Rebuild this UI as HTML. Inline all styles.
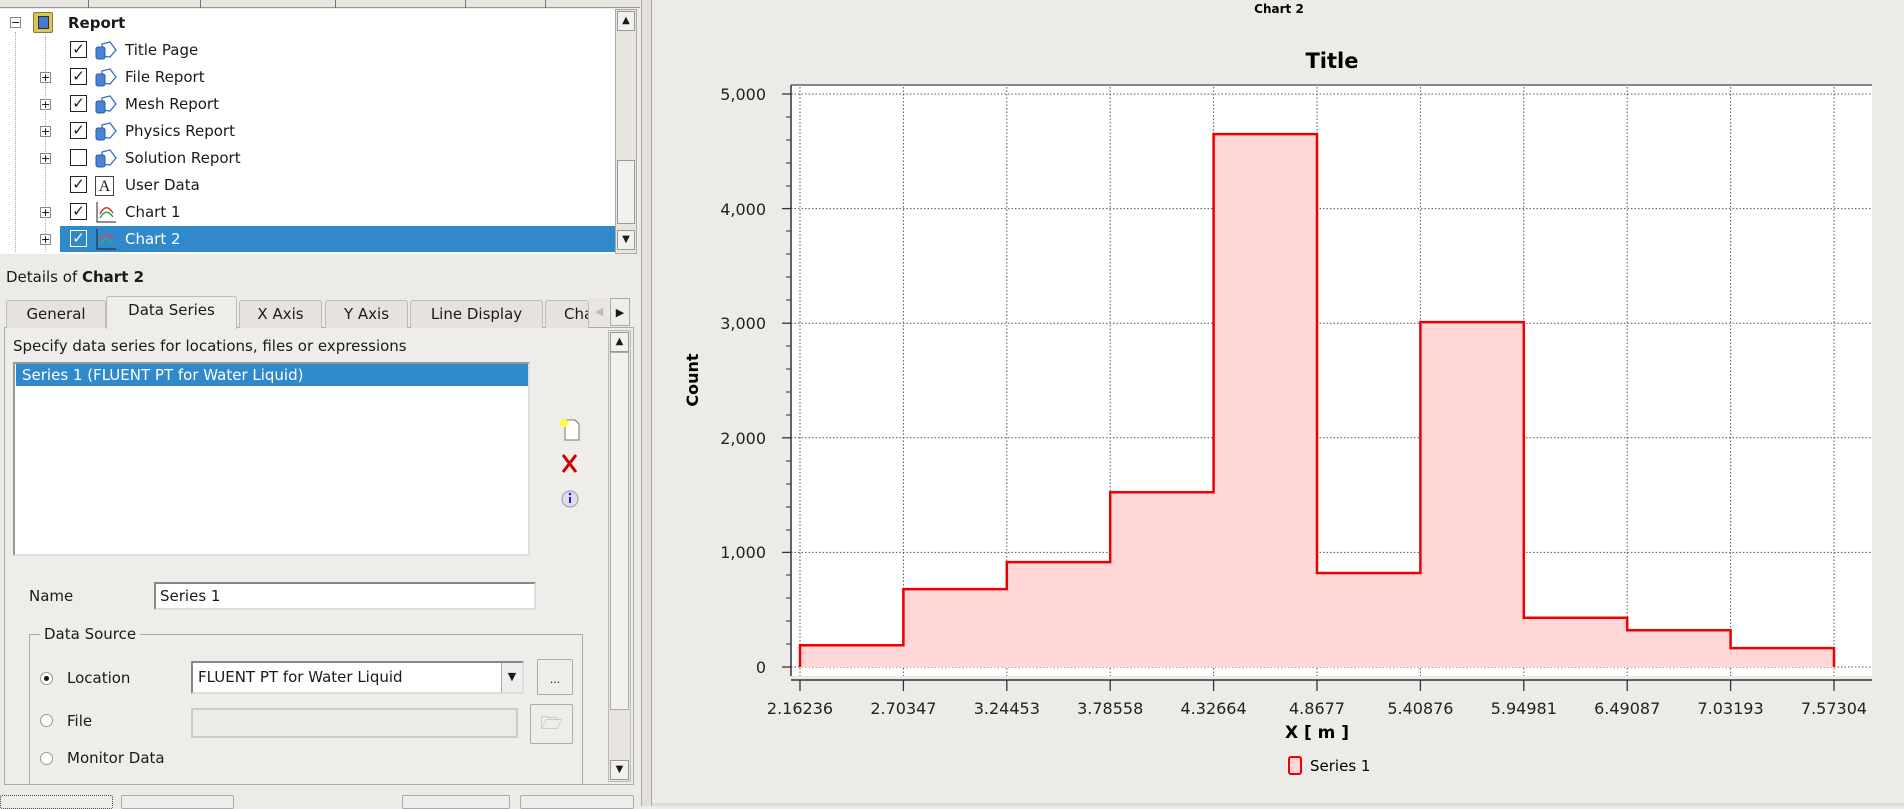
<!DOCTYPE html>
<html><head><meta charset="utf-8"><style>
*{box-sizing:border-box;margin:0;padding:0}
body{width:1904px;height:806px;overflow:hidden;background:#edebe7;font-family:"DejaVu Sans","Liberation Sans",sans-serif;font-size:15px;color:#1a1a1a;position:relative}
.a{position:absolute}
.row{position:absolute;height:26px;line-height:26px;white-space:nowrap}
.cb{position:absolute;width:17px;height:17px;border:1.5px solid #222;background:#fff;font-size:15px;line-height:14px;text-align:center;font-weight:bold}
.ex{position:absolute;width:11px;height:11px;border:1px solid #888;background:#fff;font-size:11px;line-height:9px;text-align:center;color:#000}
.ic{position:absolute;width:18px;height:18px}
.tab{position:absolute;top:300px;height:28px;line-height:26px;text-align:center;border:1px solid #bbb;border-bottom:none;background:#e6e3de;border-radius:3px 3px 0 0}
.btn{position:absolute;border:1px solid #aaa;background:#efede9;border-radius:2px}
.rad{position:absolute;width:13px;height:13px;border-radius:50%;border:1px solid #999;background:#fff}
</style></head><body>
<!-- top strip -->
<div class="a" style="left:0;top:0;width:640px;height:8px;background:#e9e6e1;border-bottom:1px solid #999"></div>
<div class="a" style="left:88px;top:0;width:1px;height:8px;background:#777"></div>
<div class="a" style="left:200px;top:0;width:1px;height:8px;background:#777"></div>
<div class="a" style="left:335px;top:0;width:1px;height:8px;background:#777"></div>
<div class="a" style="left:465px;top:0;width:1px;height:8px;background:#777"></div>
<div class="a" style="left:545px;top:0;width:1px;height:8px;background:#777"></div>
<!-- tree -->
<div class="a" style="left:0;top:9px;width:615px;height:245px;background:#fff"></div>
<div class="a" style="left:15px;top:32px;height:220px;border-left:1px dotted #aaa"></div>
<div class="a" style="left:45px;top:36px;height:216px;border-left:1px dotted #aaa"></div>
<div class="a" style="left:615px;top:9px;width:22px;height:245px;background:#e8e5e0;border:1px solid #aaa"></div>
<div class="a" style="left:617px;top:11px;width:18px;height:20px;background:#f3f1ee;border:1px solid #999;font-size:10px;text-align:center;line-height:18px">▲</div>
<div class="a" style="left:617px;top:160px;width:18px;height:64px;background:#f3f1ee;border:1px solid #999"></div>
<div class="a" style="left:617px;top:230px;width:18px;height:20px;background:#f3f1ee;border:1px solid #999;font-size:10px;text-align:center;line-height:18px">▼</div>
<div class="ex" style="left:10px;top:17px">−</div>
<div class="a" style="left:33px;top:12px;width:20px;height:21px;background:#d9c55a;border:1px solid #8a7a20;border-radius:2px"><div style="margin:3px 4px;width:11px;height:13px;background:#4a78d0;border:1px solid #234"></div></div>
<div class="row" style="left:68px;top:10px;font-weight:bold">Report</div>
<div class="a" style="left:0;top:226px;width:615px;height:0"></div>
<div class="a" style="left:60px;top:226px;width:555px;height:26px;background:#3089cb"></div>
<!-- rows -->
<div class="ex" style="left:40px;top:72px">+</div>
<div class="ex" style="left:40px;top:99px">+</div>
<div class="ex" style="left:40px;top:126px">+</div>
<div class="ex" style="left:40px;top:153px">+</div>
<div class="ex" style="left:40px;top:207px">+</div>
<div class="ex" style="left:40px;top:234px">+</div>
<div class="cb" style="left:70px;top:41px">✓</div>
<div class="cb" style="left:70px;top:68px">✓</div>
<div class="cb" style="left:70px;top:95px">✓</div>
<div class="cb" style="left:70px;top:122px">✓</div>
<div class="cb" style="left:70px;top:149px"></div>
<div class="cb" style="left:70px;top:176px">✓</div>
<div class="cb" style="left:70px;top:203px">✓</div>
<div class="cb" style="left:70px;top:230px;border-color:#fff;background:#3089cb;color:#fff">✓</div>
<svg class="a" style="left:94px;top:40px" width="24" height="140" viewBox="0 0 24 140">
<g id="p"><polygon points="8,4 16,2 22,10 16,17 8,16" fill="#fff" stroke="#3a6fc0" stroke-width="1.3"/><rect x="2" y="7" width="9" height="12" rx="2" fill="#4a84d8" stroke="#2a5aa8"/></g>
<use href="#p" y="27"/><use href="#p" y="54"/><use href="#p" y="81"/><use href="#p" y="108"/>
</svg>
<div class="a" style="left:95px;top:176px;width:19px;height:20px;border:1px solid #444;background:#fff;font-family:'Liberation Serif',serif;font-size:16px;text-align:center;line-height:19px">A</div>
<svg class="a" style="left:94px;top:200px" width="24" height="52"><path d="M3,2V22H22" stroke="#222" fill="none"/><path d="M6,14Q12,2 19,13" stroke="#d33" fill="none" stroke-width="1.5"/><path d="M6,18Q12,7 19,17" stroke="#3a3" fill="none" stroke-width="1.5"/><path d="M3,29V49H22" stroke="#222" fill="none"/><path d="M6,41Q12,29 19,40" stroke="#c46" fill="none" stroke-width="1.5"/><path d="M6,45Q12,34 19,44" stroke="#3a8" fill="none" stroke-width="1.5"/></svg>
<div class="row" style="left:125px;top:37px">Title Page</div>
<div class="row" style="left:125px;top:64px">File Report</div>
<div class="row" style="left:125px;top:91px">Mesh Report</div>
<div class="row" style="left:125px;top:118px">Physics Report</div>
<div class="row" style="left:125px;top:145px">Solution Report</div>
<div class="row" style="left:125px;top:172px">User Data</div>
<div class="row" style="left:125px;top:199px">Chart 1</div>
<div class="row" style="left:125px;top:226px;color:#fff">Chart 2</div>
<!-- splitter -->
<div class="a" style="left:641px;top:0;width:11px;height:806px;background:#e4e1dc;border-left:1px solid #aaa;border-right:1px solid #aaa"></div>
<!-- details -->
<div class="row" style="left:6px;top:264px">Details of <b>Chart 2</b></div>
<div class="a" style="left:4px;top:327px;width:630px;height:458px;border:1px solid #aaa;background:#efede9"></div>
<div class="tab" style="left:6px;width:100px">General</div>
<div class="tab" style="left:106px;width:131px;top:296px;height:33px;background:#efede9;z-index:2">Data Series</div>
<div class="tab" style="left:239px;width:83px">X Axis</div>
<div class="tab" style="left:325px;width:83px">Y Axis</div>
<div class="tab" style="left:410px;width:133px">Line Display</div>
<div class="tab" style="left:545px;width:44px;overflow:hidden;text-align:left;padding-left:18px">Cha</div>
<div class="a" style="left:589px;top:298px;width:20px;height:28px;background:#e9e6e1;color:#bbb;font-size:11px;text-align:center;line-height:28px">◀</div>
<div class="a" style="left:610px;top:298px;width:20px;height:28px;background:#efede9;border:1px solid #aaa;font-size:11px;text-align:center;line-height:28px">▶</div>
<div class="row" style="left:13px;top:333px">Specify data series for locations, files or expressions</div>
<div class="a" style="left:13px;top:362px;width:517px;height:194px;background:#fff;border:2px solid #999;border-right-color:#ddd;border-bottom-color:#ddd"></div>
<div class="row" style="left:16px;top:364px;width:512px;height:22px;line-height:22px;background:#3089cb;color:#fff;padding-left:6px">Series 1 (FLUENT PT for Water Liquid)</div>
<svg class="a" style="left:558px;top:416px" width="26" height="98"><path d="M7,4H17L21,8V24H7Z" fill="#fff" stroke="#777"/><circle cx="6" cy="7" r="4" fill="#ff3"/><path d="M5,39L18,56M18,39L5,56" stroke="#c00" stroke-width="3"/><circle cx="12" cy="83" r="8" fill="#dde" stroke="#999"/><rect x="11" y="81" width="2" height="6" fill="#22c"/><circle cx="12" cy="78" r="1.3" fill="#22c"/></svg>
<div class="a" style="left:608px;top:330px;width:23px;height:452px;background:#e7e4df;border:1px solid #bbb"></div>
<div class="a" style="left:610px;top:332px;width:19px;height:20px;background:#f3f1ee;border:1px solid #999;font-size:10px;text-align:center;line-height:18px">▲</div>
<div class="a" style="left:610px;top:352px;width:19px;height:358px;background:#f3f1ee;border:1px solid #aaa"></div>
<div class="a" style="left:610px;top:760px;width:19px;height:20px;background:#f3f1ee;border:1px solid #999;font-size:10px;text-align:center;line-height:18px">▼</div>
<div class="row" style="left:29px;top:583px">Name</div>
<div class="a" style="left:154px;top:582px;width:382px;height:28px;background:#fff;border:2px solid #888;border-right-color:#ddd;border-bottom-color:#ddd;padding-left:4px;line-height:24px">Series 1</div>
<div class="a" style="left:29px;top:634px;width:554px;height:151px;border:1px solid #aaa;border-bottom:none"></div>
<div class="row" style="left:40px;top:621px;background:#efede9;padding:0 4px">Data Source</div>
<div class="rad" style="left:40px;top:672px"><div style="margin:3px;width:5px;height:5px;border-radius:50%;background:#111"></div></div>
<div class="row" style="left:67px;top:665px">Location</div>
<div class="a" style="left:191px;top:661px;width:333px;height:33px;background:#fff;border:2px solid #888;border-right-color:#ddd;border-bottom-color:#ddd;padding-left:5px;line-height:28px">FLUENT PT for Water Liquid</div>
<div class="a" style="left:501px;top:663px;width:21px;height:29px;background:#eee;border-left:1px solid #aaa;font-size:11px;text-align:center;line-height:28px">▼</div>
<div class="btn" style="left:537px;top:659px;width:36px;height:36px;text-align:center;line-height:40px;font-size:11px">...</div>
<div class="rad" style="left:40px;top:714px"></div>
<div class="row" style="left:67px;top:708px">File</div>
<div class="a" style="left:191px;top:708px;width:327px;height:30px;background:#edebe7;border:2px solid #ccc"></div>
<div class="btn" style="left:530px;top:704px;width:43px;height:40px;text-align:center;color:#aaa;line-height:38px;font-size:18px">🗁</div>
<div class="rad" style="left:40px;top:752px"></div>
<div class="row" style="left:67px;top:745px">Monitor Data</div>
<div class="btn" style="left:0;top:795px;width:113px;height:14px;border:1px dotted #444"></div>
<div class="btn" style="left:121px;top:795px;width:113px;height:14px"></div>
<div class="btn" style="left:402px;top:795px;width:108px;height:14px"></div>
<div class="btn" style="left:520px;top:795px;width:114px;height:14px"></div>
<!-- chart -->
<svg class="a" style="left:0;top:0" width="1904" height="806" font-family="DejaVu Sans, Liberation Sans, sans-serif">
<text x="1279" y="13" font-size="12" font-weight="bold" text-anchor="middle">Chart 2</text>
<text x="1332" y="68" font-size="21" font-weight="bold" text-anchor="middle">Title</text>
<rect x="791" y="85" width="1081" height="591" fill="#fff"/>
<line x1="791" y1="85" x2="1872" y2="85" stroke="#888" stroke-width="2"/>
<g stroke="#555" stroke-dasharray="1.5,2" stroke-width="1">
<line x1="791" y1="94" x2="1872" y2="94"/><line x1="791" y1="208.6" x2="1872" y2="208.6"/><line x1="791" y1="323.2" x2="1872" y2="323.2"/><line x1="791" y1="437.8" x2="1872" y2="437.8"/><line x1="791" y1="552.4" x2="1872" y2="552.4"/><line x1="791" y1="667" x2="1872" y2="667"/>
<line x1="800" y1="87" x2="800" y2="676"/><line x1="903.4" y1="87" x2="903.4" y2="676"/><line x1="1006.8" y1="87" x2="1006.8" y2="676"/><line x1="1110.2" y1="87" x2="1110.2" y2="676"/><line x1="1213.6" y1="87" x2="1213.6" y2="676"/><line x1="1317" y1="87" x2="1317" y2="676"/><line x1="1420.4" y1="87" x2="1420.4" y2="676"/><line x1="1523.8" y1="87" x2="1523.8" y2="676"/><line x1="1627.2" y1="87" x2="1627.2" y2="676"/><line x1="1730.6" y1="87" x2="1730.6" y2="676"/><line x1="1834" y1="87" x2="1834" y2="676"/>
</g>
<path d="M800,667V645.2H903.4V589.1H1006.8V562.1H1110.2V492.2H1213.6V134.1H1317V573H1420.4V322.1H1523.8V617.7H1627.2V630.3H1730.6V648.1H1834V667Z" fill="#ffd7d9"/>
<path d="M800,667V645.2H903.4V589.1H1006.8V562.1H1110.2V492.2H1213.6V134.1H1317V573H1420.4V322.1H1523.8V617.7H1627.2V630.3H1730.6V648.1H1834V667" fill="none" stroke="#e00" stroke-width="2.5"/>
<line x1="791" y1="85" x2="791" y2="676" stroke="#333" stroke-width="1.5"/>
<g stroke="#333" stroke-width="1.3">
<line x1="782" y1="94" x2="791" y2="94"/><line x1="782" y1="208.6" x2="791" y2="208.6"/><line x1="782" y1="323.2" x2="791" y2="323.2"/><line x1="782" y1="437.8" x2="791" y2="437.8"/><line x1="782" y1="552.4" x2="791" y2="552.4"/><line x1="782" y1="667" x2="791" y2="667"/>
</g>
<g stroke="#333" stroke-width="1">
<path d="M786,117H791M786,140H791M786,163H791M786,186H791M786,231H791M786,254H791M786,277H791M786,300H791M786,346H791M786,369H791M786,392H791M786,415H791M786,461H791M786,484H791M786,507H791M786,530H791M786,575H791M786,598H791M786,621H791M786,644H791"/>
</g>
<line x1="791" y1="680" x2="1872" y2="680" stroke="#333" stroke-width="1.5"/>
<g stroke="#333" stroke-width="1.3"><path d="M800,680V691M903.4,680V691M1006.8,680V691M1110.2,680V691M1213.6,680V691M1317,680V691M1420.4,680V691M1523.8,680V691M1627.2,680V691M1730.6,680V691M1834,680V691"/></g>
<g font-size="16" text-anchor="end" fill="#222">
<text x="766" y="100">5,000</text><text x="766" y="215">4,000</text><text x="766" y="329">3,000</text><text x="766" y="444">2,000</text><text x="766" y="558">1,000</text><text x="766" y="673">0</text>
</g>
<g font-size="16" text-anchor="middle" fill="#222">
<text x="800" y="714">2.16236</text><text x="903.4" y="714">2.70347</text><text x="1006.8" y="714">3.24453</text><text x="1110.2" y="714">3.78558</text><text x="1213.6" y="714">4.32664</text><text x="1317" y="714">4.8677</text><text x="1420.4" y="714">5.40876</text><text x="1523.8" y="714">5.94981</text><text x="1627.2" y="714">6.49087</text><text x="1730.6" y="714">7.03193</text><text x="1834" y="714">7.57304</text>
</g>
<text x="1317" y="738" font-size="17" font-weight="bold" text-anchor="middle">X [ m ]</text>
<text transform="translate(698,380) rotate(-90)" font-size="16" font-weight="bold" text-anchor="middle">Count</text>
<rect x="1289" y="757" width="12" height="17" rx="2" fill="#ffd7d9" stroke="#e00" stroke-width="2"/>
<text x="1310" y="771" font-size="15">Series 1</text>
<rect x="652" y="803" width="1252" height="3" fill="#ddd"/>
</svg>
</body></html>
